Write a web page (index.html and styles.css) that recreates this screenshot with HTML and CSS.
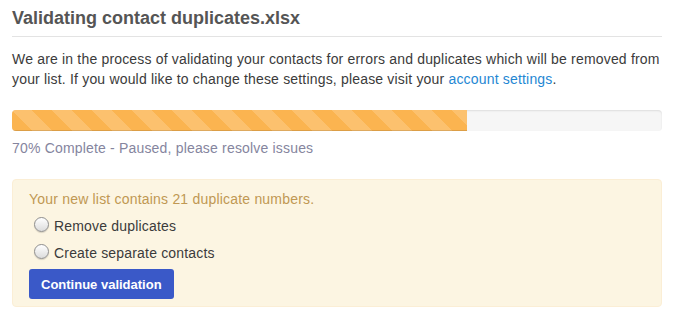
FILE: index.html
```html
<!DOCTYPE html>
<html>
<head>
<meta charset="utf-8">
<link rel="stylesheet" href="styles.css">
</head>
<body>
<div class="page">
  <h1 class="title">Validating contact duplicates.xlsx</h1>
  <p class="intro">We are in the process of validating your contacts for errors and duplicates which will be removed from your list. If you would like to change these settings, please visit your <a href="#" class="link">account settings</a>.</p>
  <div class="progress"><div class="bar" style="width: 70%"></div></div>
  <div class="status">70% Complete - Paused, please resolve issues</div>
  <div class="alert">
    <div class="alert-text">Your new list contains 21 duplicate numbers.</div>
    <label class="option"><span class="radio"></span><span>Remove duplicates</span></label>
    <label class="option"><span class="radio"></span><span>Create separate contacts</span></label>
    <button class="btn">Continue validation</button>
  </div>
</div>
</body>
</html>
```

FILE: styles.css
```css
html, body {
  margin: 0;
  padding: 0;
  background: #fff;
}
.page {
  width: 650px;
  padding: 0 12px;
  font-family: "Liberation Sans", Arial, sans-serif;
  font-size: 14px;
  line-height: 20px;
  color: #3b3b3b;
}
.title {
  margin: 8px 0 0;
  padding-bottom: 8px;
  font-size: 18px;
  line-height: 20px;
  font-weight: bold;
  color: #555;
  border-bottom: 1px solid #e3e3e3;
}
.intro {
  margin: 12px 0 0;
  letter-spacing: 0.18px;
}
.link {
  color: #1f87d3;
  text-decoration: none;
}
.progress {
  margin-top: 21px;
  height: 21px;
  border-radius: 4px;
  overflow: hidden;
  background: #f6f6f6;
  box-shadow: inset 0 1px 2px rgba(0,0,0,0.1);
}
.bar {
  height: 100%;
  background-color: #fbb450;
  background-image: linear-gradient(45deg, rgba(255,255,255,0.17) 25%, transparent 25%, transparent 50%, rgba(255,255,255,0.17) 50%, rgba(255,255,255,0.17) 75%, transparent 75%, transparent);
  background-size: 40px 40px;
  box-shadow: inset 0 -1px 0 rgba(0,0,0,0.12);
}
.status {
  margin-top: 7px;
  color: #85859e;
  letter-spacing: 0.18px;
}
.alert {
  margin-top: 21px;
  padding: 9px 16px 7px;
  background: #fcf5e2;
  border: 1px solid #fbeed5;
  border-radius: 4px;
}
.alert-text {
  color: #c09853;
  letter-spacing: 0.2px;
}
.option {
  display: flex;
  align-items: center;
  gap: 5px;
  padding-left: 5px;
  margin-top: 7px;
  color: #3b3b3b;
  letter-spacing: 0.18px;
}
.radio {
  width: 13px;
  height: 13px;
  border-radius: 50%;
  border: 1px solid #8e8e8e;
  background: linear-gradient(#ffffff, #dcdcdc);
  box-shadow: 0 1px 1px rgba(0,0,0,0.15);
  margin-top: -4px;
}
.btn {
  display: block;
  margin-top: 6px;
  height: 30px;
  padding: 0 12px;
  border: 0;
  border-radius: 3px;
  background: #3a59c8;
  color: #fff;
  font-family: "Liberation Sans", Arial, sans-serif;
  font-size: 13px;
  font-weight: bold;
}
```
